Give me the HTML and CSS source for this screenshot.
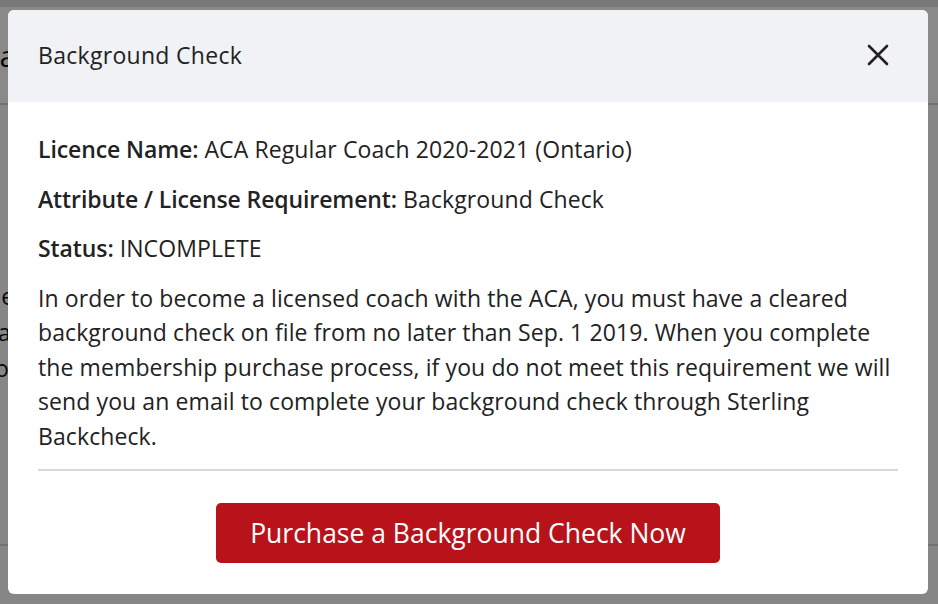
FILE: index.html
```html
<!DOCTYPE html>
<html lang="en">
<head>
<meta charset="utf-8">
<title>Background Check</title>
<link rel="stylesheet" href="styles.css">
</head>
<body>
<div class="page">
  <div class="page-top"></div>
  <div class="page-header"><span class="page-title">Background Check</span></div>
  <div class="page-content">
    <p class="page-line">view</p>
    <p class="page-line">name</p>
    <p class="page-line">coach</p>
  </div>
  <div class="page-footer"></div>
</div>
<div class="backdrop"></div>
<div class="modal" role="dialog" aria-labelledby="modal-title">
  <div class="modal-header">
    <h2 class="modal-title" id="modal-title">Background Check</h2>
    <button class="close-btn" aria-label="Close">
      <svg width="22" height="22" viewBox="0 0 22 22"><path d="M2 2 L20 20 M20 2 L2 20" stroke="#212121" stroke-width="2.6" stroke-linecap="round" fill="none"/></svg>
    </button>
  </div>
  <div class="modal-body">
    <p class="row"><strong>Licence Name:</strong> ACA Regular Coach 2020-2021 (Ontario)</p>
    <p class="row"><strong>Attribute / License Requirement:</strong> Background Check</p>
    <p class="row"><strong>Status:</strong> INCOMPLETE</p>
    <p class="row">In order to become a licensed coach with the ACA, you must have a cleared background check on file from no later than Sep. 1 2019. When you complete the membership purchase process, if you do not meet this requirement we will send you an email to complete your background check through Sterling Backcheck.</p>
    <hr class="divider">
    <div class="actions">
      <button class="primary-btn">Purchase a Background Check Now</button>
    </div>
  </div>
</div>
</body>
</html>
```
FILE: styles.css
```css
* { box-sizing: border-box; }
html, body { margin: 0; padding: 0; }
body {
  width: 938px;
  height: 604px;
  overflow: hidden;
  position: relative;
  font-family: "Open Sans", "Noto Sans", sans-serif;
  background: #f4f4f4;
  color: #222;
}
.page { display: flex; flex-direction: column; height: 604px; }
.page-top { height: 7px; background: #dcdcdc; }
.page-header {
  height: 98px;
  border-bottom: 2px solid #cfcfcf;
  background: #fafafa;
  display: flex;
  align-items: center;
}
.page-title { font-size: 30px; margin-left: -20px; color: #111; }
.page-content { flex: 1; padding-top: 180px; }
.page-line { margin: 0 0 14px -16px; font-size: 23px; line-height: 22px; color: #111; }
.page-footer { height: 60px; border-top: 2px solid #cfcfcf; }
.backdrop {
  position: absolute;
  inset: 0;
  background: rgba(0, 0, 0, 0.45);
}
.modal {
  position: absolute;
  left: 8px;
  top: 10px;
  width: 920px;
  height: 584px;
  background: #fff;
  border-radius: 6px;
  overflow: hidden;
  display: flex;
  flex-direction: column;
}
.modal-header {
  height: 92px;
  background: #f1f2f6;
  display: flex;
  align-items: center;
  justify-content: space-between;
  padding: 0 39px 0 30px;
}
.modal-title {
  margin: 0 0 2px;
  font-size: 23px;
  font-weight: 400;
  letter-spacing: 0.3px;
  color: #222;
}
.close-btn {
  background: none;
  border: 0;
  padding: 0;
  width: 22px;
  height: 22px;
  display: flex;
  margin-bottom: 2px;
}
.modal-body {
  padding: 30px 30px 0 30px;
  font-size: 23px;
  line-height: 34.5px;
  letter-spacing: 0.1px;
  color: #222;
}
.row { margin: 0 0 15px; }
.row strong { font-weight: 600; letter-spacing: -0.1px; }
.divider {
  border: 0;
  border-top: 2px solid #d9d9d9;
  margin: 16px 0 32px;
}
.actions { display: flex; justify-content: center; }
.primary-btn {
  width: 504px;
  height: 60px;
  background: #b8131a;
  color: #fff;
  border: 0;
  border-radius: 5px;
  font-family: inherit;
  font-size: 26.5px;
  padding: 0;
}
```
